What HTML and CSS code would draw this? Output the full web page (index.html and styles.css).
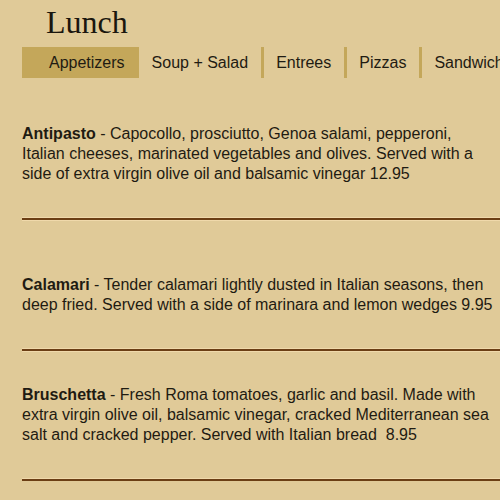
FILE: index.html
```html
<!DOCTYPE html>
<html lang="en">
<head>
    <meta charset="UTF-8">
    <meta name="viewport" content="width=device-width, initial-scale=1.0">
    <title>Lunch Menu</title>
    <link rel="stylesheet" href="styles.css">
</head>
<body>
    <div id="page">
        <h1>Lunch</h1>
        <ul class="tabs">
            <li class="active">Appetizers</li>
            <li>Soup + Salad</li>
            <li class="sep">Entrees</li>
            <li class="sep">Pizzas</li>
            <li class="sep">Sandwiches</li>
            <li class="sep">Desserts</li>
        </ul>
        <div class="menu">
            <div class="item">
                <b>Antipasto</b> - Capocollo, prosciutto, Genoa salami, pepperoni, Italian cheeses, marinated vegetables and olives. Served with a side of extra virgin olive oil and balsamic vinegar 12.95
            </div>
            <hr>
            <div class="item spaced">
                <b>Calamari</b> - Tender calamari lightly dusted in Italian seasons, then deep fried. Served with a side of marinara and lemon wedges 9.95
            </div>
            <hr>
            <div class="item">
                <b>Bruschetta</b> - Fresh Roma tomatoes, garlic and basil. Made with extra virgin olive oil, balsamic vinegar, cracked Mediterranean sea salt and cracked pepper. Served with Italian bread&nbsp; 8.95
            </div>
            <hr>
        </div>
    </div>
</body>
</html>
```

FILE: styles.css
```css
html, body {
    overflow: hidden;
}
body {
    margin: 0;
    background-color: #e0ca98;
    color: #1f1b12;
    font-family: "Liberation Sans", Arial, sans-serif;
    font-size: 16px;
}
#page {
    padding-left: 22px;
}
h1 {
    margin: 0;
    padding: 4px 0 0 24px;
    height: 43px;
    font-family: "Liberation Serif", "Times New Roman", serif;
    font-size: 32px;
    font-weight: normal;
    line-height: 36px;
    color: #1a160e;
}
.tabs {
    list-style: none;
    margin: 0;
    padding: 0;
    display: flex;
    white-space: nowrap;
    height: 31px;
}
.tabs li {
    padding: 0 13px;
    line-height: 31px;
    flex-shrink: 0;
}
.tabs li.active {
    background-color: #c4a75a;
    padding: 0 14px 0 27px;
}
.tabs li.sep {
    border-left: 3px solid #c4a75a;
    padding-left: 12px;
}
.menu {
    padding-top: 46px;
}
.item {
    width: 472px;
    line-height: 20px;
    padding-bottom: 34px;
}
.menu hr + .item {
    padding-top: 34px;
}
.menu hr + .item.spaced {
    padding-top: 55px;
}
hr {
    border: 0;
    margin: 0;
    height: 2px;
    width: 500px;
    background-color: #6b3e14;
    box-shadow: 0 -1px 0 #f0d9ab, 0 1px 0 #f0d9ab;
}
```
